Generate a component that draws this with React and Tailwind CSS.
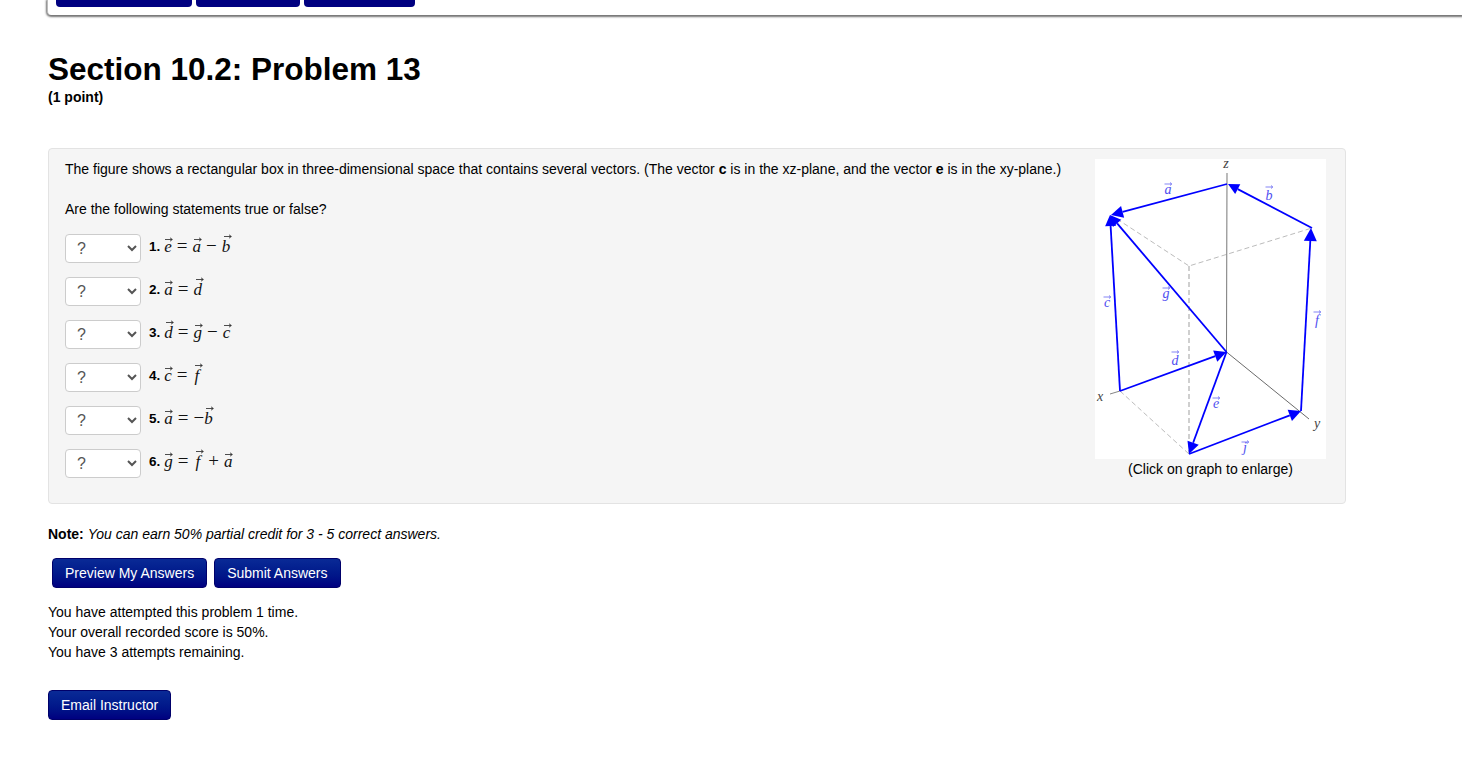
import React from 'react'

const statements = [
  { n: 1, expr: [['v', 'e'], ['o', '='], ['v', 'a'], ['o', '−'], ['v', 'b']] },
  { n: 2, expr: [['v', 'a'], ['o', '='], ['v', 'd']] },
  { n: 3, expr: [['v', 'd'], ['o', '='], ['v', 'g'], ['o', '−'], ['v', 'c']] },
  { n: 4, expr: [['v', 'c'], ['o', '='], ['v', 'f']] },
  { n: 5, expr: [['v', 'a'], ['o', '='], ['p', '−'], ['v', 'b']] },
  { n: 6, expr: [['v', 'g'], ['o', '='], ['v', 'f'], ['o', '+'], ['v', 'a']] },
]

const TALL = ['b', 'd', 'f']

function Vec({ name }) {
  const tall = TALL.includes(name)
  return (
    <span className={name === 'f' ? 'relative inline-block italic pl-[2px] pr-[3px]' : 'relative inline-block italic'}>
      {name}
      <svg
        className={tall ? 'absolute left-[2px] top-[-3px] overflow-visible' : 'absolute left-[1px] top-[0px] overflow-visible'}
        width="8"
        height="5"
        viewBox="0 0 8 5"
      >
        <path d="M0 2.5H7M5 0.8L7.4 2.5L5 4.2" fill="none" stroke="#222" strokeWidth="0.8" />
      </svg>
    </span>
  )
}

function Expr({ parts }) {
  return (
    <span className="font-['Liberation_Serif',serif] text-[17px] leading-5 text-[#111]">
      {parts.map(([kind, val], i) => {
        if (kind === 'v') return <Vec key={i} name={val} />
        if (kind === 'p') return <span key={i} className="text-[19px] leading-none">{val}</span>
        return <span key={i} className="mx-[5px] text-[19px] leading-none">{val}</span>
      })}
    </span>
  )
}

function Arrow({ x1, y1, x2, y2, size = 11 }) {
  // blue vector with a solid triangular head at x2,y2
  const len = Math.hypot(x2 - x1, y2 - y1)
  const ux = (x2 - x1) / len
  const uy = (y2 - y1) / len
  const bx = x2 - ux * size
  const by = y2 - uy * size
  const w = size * 0.5
  const pts = `${x2},${y2} ${bx - uy * w},${by + ux * w} ${bx + uy * w},${by - ux * w}`
  return (
    <g>
      <line x1={x1} y1={y1} x2={bx} y2={by} stroke="#0000ff" strokeWidth="1.8" />
      <polygon points={pts} fill="#0000ff" />
    </g>
  )
}

function Label({ x, y, t, blue = true, arrow = true }) {
  const color = blue ? '#5050f0' : '#444'
  const ay = TALL.includes(t) ? y - 13 : y - 10
  return (
    <g>
      <text x={x} y={y} textAnchor="middle" fontFamily="Liberation Serif, serif" fontStyle="italic" fontSize="14" fill={color}>
        {t}
      </text>
      {arrow && <path d={`M${x - 3.5} ${ay}H${x + 3.5}M${x + 2} ${ay - 1.5}L${x + 3.8} ${ay}L${x + 2} ${ay + 1.5}`} fill="none" stroke={color} strokeWidth="0.7" />}
    </g>
  )
}

function Figure() {
  return (
    <svg width="231" height="300" viewBox="1095 159 231 300" className="block bg-white overflow-visible">
      {/* hidden box edges */}
      <path d="M1117 219L1189 266L1312 228" fill="none" stroke="#aaa" strokeWidth="0.8" strokeDasharray="5 3" />
      <path d="M1189 266V454" fill="none" stroke="#777" strokeWidth="0.7" strokeDasharray="5 3" />
      <path d="M1120 391L1189 454" fill="none" stroke="#aaa" strokeWidth="0.8" strokeDasharray="5 3" />
      {/* axes */}
      <path d="M1227 173L1226.5 352" stroke="#777" strokeWidth="1" />
      <path d="M1226.5 352L1309 419" stroke="#444" strokeWidth="0.8" />
      <path d="M1110 394L1120 391" stroke="#666" strokeWidth="0.8" />
      <Arrow x1={1227} y1={184} x2={1111} y2={215} size={12} />
      <Arrow x1={1312} y1={228} x2={1228} y2={184} size={11} />
      <Arrow x1={1120} y1={391} x2={1110} y2={215} size={11} />
      <Arrow x1={1226.5} y1={352} x2={1110} y2={215} size={11} />
      <Arrow x1={1301} y1={411} x2={1311} y2={228} size={13} />
      <Arrow x1={1120} y1={391} x2={1226.5} y2={352} size={12} />
      <Arrow x1={1226.5} y1={352} x2={1189} y2={454} size={12} />
      <Arrow x1={1189} y1={454} x2={1301} y2={411} size={12} />
      <Label x={1226} y={168} t="z" blue={false} arrow={false} />
      <Label x={1168} y={194} t="a" />
      <Label x={1269} y={200} t="b" />
      <Label x={1107} y={307} t="c" />
      <Label x={1166} y={298} t="g" />
      <Label x={1317} y={325} t="f" />
      <Label x={1175} y={365} t="d" />
      <Label x={1216} y={408} t="e" />
      <Label x={1245} y={452} t="j" />
      <Label x={1100} y={401} t="x" blue={false} arrow={false} />
      <Label x={1317} y={428} t="y" blue={false} arrow={false} />
    </svg>
  )
}

function NavyButton({ children }) {
  return (
    <button className="h-[30px] px-[12px] rounded-[4px] border border-[#00006a] bg-gradient-to-b from-[#0a2a96] to-[#000080] text-white text-[14px] leading-5">
      {children}
    </button>
  )
}

export default function App() {
  return (
    <div className="h-[766px] overflow-hidden bg-white text-black text-[14px] leading-5 font-['Liberation_Sans',Arial,sans-serif]">
      {/* clipped site header */}
      <div className="ml-[47px] h-[15px] flex items-start gap-[4px] pl-[8px] bg-white border-l border-[#bbb] rounded-bl-[4px] shadow-[0_1px_2px_1px_rgba(0,0,0,0.55)]">
        <div className="w-[136px] h-[7px] bg-[#000080] rounded-b-[4px]" />
        <div className="w-[104px] h-[7px] bg-[#000080] rounded-b-[4px]" />
        <div className="w-[111px] h-[7px] bg-[#000080] rounded-b-[4px]" />
      </div>

      <div className="ml-[48px]">
        <h1 className="mt-[36px] text-[31.5px] leading-9 font-bold">Section 10.2: Problem 13</h1>
        <div className="font-bold">(1 point)</div>

        {/* problem box */}
        <div className="mt-[41px] w-[1298px] h-[356px] flex justify-between bg-[#f5f5f5] border border-[#e3e3e3] rounded-[4px] pl-[16px] pr-[19px] pt-[10px]">
          <div>
            <p className="whitespace-nowrap">
              The figure shows a rectangular box in three-dimensional space that contains several vectors. (The vector <b>c</b> is in the xz-plane, and the vector <b>e</b> is in the xy-plane.)
            </p>
            <p className="mt-[20px]">Are the following statements true or false?</p>
            <div className="mt-[15px] flex flex-col gap-[14px]">
              {statements.map((s) => (
                <div key={s.n} className="flex items-center h-[29px] gap-[8px]">
                  <select className="w-[76px] h-[29px] pl-[7px] bg-white border border-[#ccc] rounded-[4px] text-[#555] text-[16px]">
                    <option>?</option>
                    <option>True</option>
                    <option>False</option>
                  </select>
                  <span className="text-[13.5px] font-bold -mt-[3px]">{s.n}.</span>
                  <span className="-ml-[4px] -mt-[4px]"><Expr parts={s.expr} /></span>
                </div>
              ))}
            </div>
          </div>
          <div className="w-[231px]">
            <Figure />
            <div className="text-center">(Click on graph to enlarge)</div>
          </div>
        </div>

        <p className="mt-[20px]"><b>Note:</b> <i>You can earn 50% partial credit for 3 - 5 correct answers.</i></p>

        <div className="mt-[14px] ml-[4px] flex gap-[7px]">
          <NavyButton>Preview My Answers</NavyButton>
          <NavyButton>Submit Answers</NavyButton>
        </div>

        <div className="mt-[14px]">
          <div>You have attempted this problem 1 time.</div>
          <div>Your overall recorded score is 50%.</div>
          <div>You have 3 attempts remaining.</div>
        </div>

        <div className="mt-[28px]">
          <NavyButton>Email Instructor</NavyButton>
        </div>
      </div>
    </div>
  )
}
